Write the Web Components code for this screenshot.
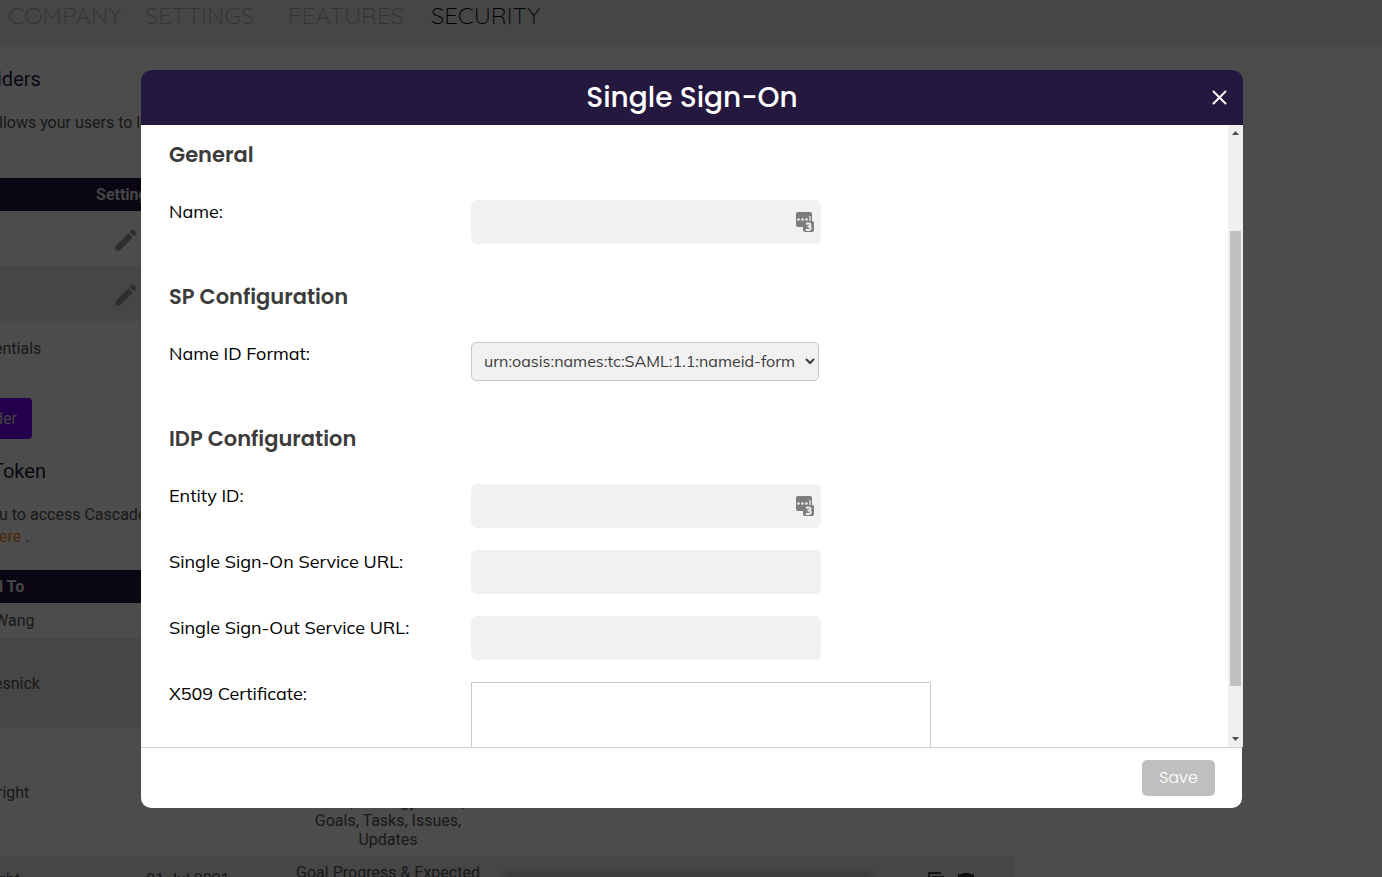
<!DOCTYPE html>
<html lang="en">
<head>
<meta charset="utf-8">
<meta name="viewport" content="width=device-width, initial-scale=1">
<title>Security settings</title>
<style>
html, body { margin: 0; height: 100%; }
body { overflow: hidden; background: #fff; font: 16px/22px Roboto, "Liberation Sans", sans-serif; }
</style>
</head>
<body>
<security-page></security-page>
<modal-overlay>
  <modal-dialog heading="Single Sign-On">
    <form-section heading="General">
      <form-row label="Name:" kind="text" manager></form-row>
    </form-section>
    <form-section heading="SP Configuration">
      <form-row label="Name ID Format:" kind="select"></form-row>
    </form-section>
    <form-section heading="IDP Configuration">
      <form-row label="Entity ID:" kind="text" manager></form-row>
      <form-row label="Single Sign-On Service URL:" kind="text"></form-row>
      <form-row label="Single Sign-Out Service URL:" kind="text"></form-row>
      <form-row label="X509 Certificate:" kind="textarea"></form-row>
    </form-section>
    <save-button slot="actions">Save</save-button>
  </modal-dialog>
</modal-overlay>
<script>
class Base extends HTMLElement {
  connectedCallback() {
    if (!this.shadowRoot) this.attachShadow({ mode: 'open' }).innerHTML = this.render();
  }
}

customElements.define('page-tabs', class extends Base {
  render() {
    return `<style>
      :host { display: block; background: #e9e9e9; }
      nav { display: grid; grid-template-columns: 111px 117px 117px auto; justify-content: start; gap: 26px; height: 47px; padding-left: 8px; box-sizing: border-box; }
      a { font: 300 24px/30px Quicksand, Lato, sans-serif; color: #adadad; text-decoration: none; white-space: nowrap; }
      a[aria-current] { color: #000; }
    </style>
    <nav><a href="#company">COMPANY</a><a href="#settings">SETTINGS</a><a href="#features">FEATURES</a><a href="#security" aria-current="page">SECURITY</a></nav>`;
  }
});

customElements.define('pencil-icon', class extends Base {
  render() {
    return `<style>:host { display: block; } svg { display: block; }</style>
    <svg width="28" height="28" viewBox="0 0 24 24" fill="#9a9a9a"><path d="M3 17.25V21h3.75L17.81 9.94l-3.75-3.75L3 17.25zM20.71 7.04a.996.996 0 0 0 0-1.41l-2.34-2.34a.996.996 0 0 0-1.41 0l-1.83 1.83 3.75 3.75 1.83-1.83z"/></svg>`;
  }
});

customElements.define('security-page', class extends Base {
  render() {
    return `<style>
      :host { display: block; height: 100vh; overflow: hidden; color: #555; }
      section { margin-left: -6px; }
      h2 { margin: 0; font-weight: 400; font-size: 20px; line-height: 24px; color: #24183f; }
      h2, p { white-space: nowrap; }
      p { margin: 0; }
      .intro { padding-left: 5px; }
      a { color: #ff8a2a; text-decoration: none; }
      .providers { padding-top: 20px; }
      .providers h2 { padding-left: 3px; }
      .providers p { margin: 21px 0 44px; }
      table { border-collapse: collapse; table-layout: fixed; }
      td, th { padding: 0; }
      thead tr { height: 33px; background: #24183f; color: #e8e8e8; }
      .settings { width: 264px; }
      .settings tbody tr { height: 55px; }
      .settings tbody tr:nth-child(even), .tokens tbody tr:nth-child(even) { background: #ebebeb; }
      .settings pencil-icon { width: 28px; margin: 2px auto 0; }
      .providers .settings + p { margin: 17px 0 38px; }
      button { display: block; height: 41px; border: 0; border-radius: 4px; background: #7a00ff; color: #ddd; font: inherit; padding: 0 15px 0 0; }
      .token { margin-top: 20px; }
      .token h2 { margin-left: -2px; }
      .token p { margin: 21px 0 22px; }
      .tokens { width: 1020px; line-height: 19px; text-align: center; }
      .tokens th:first-child, .tokens td:first-child { text-align: left; }
      .r1 { height: 35px; } .r2 { height: 90px; } .r3 { height: 128px; } .r4 { height: 72px; }
      .r3 td:first-child, .r4 td:first-child { padding-left: 3px; }
      .r3 td:nth-child(3) { vertical-align: bottom; padding-bottom: 7px; }
      .r4 td { vertical-align: top; padding-top: 7px; }
      .r4 td:first-child, .r4 td:nth-child(2), .r4 td:nth-child(5) { padding-top: 14px; }
      .r4 td:nth-child(4) { padding-top: 16px; }
      .blur { height: 8px; background: #c4c4c4; filter: blur(3px); margin: 0 15px; }
      .acts svg { margin: 0 3px; }
    </style>
    <page-tabs></page-tabs>
    <section class="providers">
      <h2>iders</h2>
      <p class="intro">llows your users to log in</p>
      <table class="settings">
        <thead><tr><th>Settings</th></tr></thead>
        <tbody><tr><td><pencil-icon></pencil-icon></td></tr><tr><td><pencil-icon></pencil-icon></td></tr></tbody>
      </table>
      <p>entials</p>
      <button type="button">der</button>
    </section>
    <section class="token">
      <h2>Token</h2>
      <p class="intro">u to access Cascade<br><a href="#docs">ere</a> .</p>
      <table class="tokens">
        <colgroup><col style="width:94px"><col style="width:200px"><col style="width:200px"><col style="width:400px"><col></colgroup>
        <thead><tr><th>d To</th><th></th><th></th><th></th><th></th></tr></thead>
        <tbody>
          <tr class="r1"><td>Wang</td><td></td><td></td><td></td><td></td></tr>
          <tr class="r2"><td>esnick</td><td></td><td></td><td></td><td></td></tr>
          <tr class="r3"><td>right</td><td></td><td>Plans, Strategy Areas,<br>Goals, Tasks, Issues,<br>Updates</td><td></td><td></td></tr>
          <tr class="r4"><td>ght</td><td>01 Jul 2021</td><td>Goal Progress &amp; Expected</td><td><div class="blur"></div></td>
            <td class="acts"><svg width="24" height="24" viewBox="0 0 24 24" fill="#444"><path d="M4 2h13v2H6v13H4V2zm4 4h12v16H8V6zm2 2v12h8V8h-8z"/></svg><svg width="24" height="24" viewBox="0 0 24 24" fill="#333"><path d="M9 3h6l1 1h4v3H4V4h4l1-1zM5 8h14v13H5V8z"/></svg></td></tr>
        </tbody>
      </table>
    </section>`;
  }
});

customElements.define('modal-overlay', class extends Base {
  render() {
    return `<style>
      :host { position: fixed; inset: 0; display: flex; box-sizing: border-box; padding: 70px 139px 69px 141px; background: rgba(0,0,0,.7); }
      ::slotted(*) { flex: 1; min-width: 0; }
    </style><slot></slot>`;
  }
});

customElements.define('scroll-rail', class extends Base {
  render() {
    return `<style>
      :host { display: flex; flex-direction: column; align-items: center; width: 15px; background: #f0f0f0; }
      svg { display: block; flex: none; }
      .track { flex: 1; align-self: stretch; display: grid; grid-template-rows: 91fr 455fr 46fr; padding: 0 2px; }
      .thumb { grid-row: 2; background: #c1c1c1; }
    </style>
    <svg width="15" height="15"><path d="M4 10h7L7.500 6z" fill="#505050"/></svg>
    <div class="track"><div class="thumb"></div></div>
    <svg width="15" height="15"><path d="M4 5h7L7.500 9z" fill="#505050"/></svg>`;
  }
});

customElements.define('modal-dialog', class extends Base {
  render() {
    return `<style>
      :host { display: flex; flex-direction: column; }
      header { flex: none; display: grid; grid-template-columns: 1fr auto 1fr; align-items: center; height: 55px; background: #24183f; color: #fff; border-radius: 11px 11px 0 0; }
      h1 { grid-column: 2; margin: 0; font: 500 28px/40px Poppins, Inter, sans-serif; }
      button { justify-self: end; margin-right: 14px; width: 20px; height: 20px; padding: 0; border: 0; background: none; }
      button svg { display: block; }
      .body { flex: 1; min-height: 0; display: flex; background: #fff; }
      .content { flex: 1; min-width: 0; overflow: hidden; padding: 14px 28px 0; box-sizing: border-box; }
      footer { flex: none; display: flex; justify-content: flex-end; align-items: center; height: 61px; margin-right: 1px; padding-right: 27px; box-sizing: border-box; border-top: 1px solid #d4d4d4; background: #fff; border-radius: 0 0 10px 10px; }
    </style>
    <header><h1>${this.getAttribute('heading')}</h1>
      <button type="button" aria-label="Close"><svg width="20" height="20" viewBox="0 0 20 20" fill="none" stroke="#fff" stroke-width="2" stroke-linecap="round"><path d="M4.500 3.500l12 12M16.500 3.500l-12 12"/></svg></button></header>
    <div class="body"><div class="content"><slot></slot></div><scroll-rail></scroll-rail></div>
    <footer><slot name="actions"></slot></footer>`;
  }
});

customElements.define('form-section', class extends Base {
  render() {
    return `<style>
      :host { display: flow-root; margin-bottom: 15px; }
      h2 { margin: 0 0 29px; font: 600 21px/32px Poppins, Inter, sans-serif; color: #3c3c3c; }
    </style><h2>${this.getAttribute('heading')}</h2><slot></slot>`;
  }
});

customElements.define('form-row', class extends Base {
  render() {
    const label = this.getAttribute('label');
    const controls = {
      text: '<input id="f" type="text">',
      select: '<select id="f"><option>urn:oasis:names:tc:SAML:1.1:nameid-form</option></select>',
      textarea: '<textarea id="f" rows="6"></textarea>'
    };
    const badge = this.hasAttribute('manager') ? `<svg class="badge" width="20" height="22" viewBox="0 0 20 22">
      <path d="M3 1h12a2 2 0 0 1 2 2v7h-6a2 2 0 0 0-2 2v4H3a2 2 0 0 1-2-2V3a2 2 0 0 1 2-2z" fill="#7d7d7d"/>
      <rect x="8" y="10" width="11" height="11" rx="2" fill="#7d7d7d"/>
      <circle cx="3.500" cy="8.500" r="1.300" fill="#eee"/><circle cx="7.500" cy="8.500" r="1.300" fill="#eee"/><circle cx="11.500" cy="8.500" r="1.300" fill="#eee"/>
      <path d="M14 5h2v5h-2z" fill="#c4c4c4"/>
      <path d="M11 12.800q4.500-.8 4.500 1.200t-2.800 1.500q3.300 0 3.100 2t-5 1.400" fill="none" stroke="#f1f1f1" stroke-width="1.900"/></svg>` : '';
    return `<style>
      :host { display: grid; grid-template-columns: 302px 1fr; align-items: start; min-height: 44px; margin-bottom: 22px; }
      label { font: 18px/24px Mulish, "Noto Sans", sans-serif; color: #000; }
      .control { position: relative; width: 350px; }
      input, select, textarea { display: block; box-sizing: border-box; margin: 0; font: 16px/24px Mulish, "Noto Sans", sans-serif; color: #3c3c3c; }
      input { width: 350px; height: 44px; padding: 0 36px 0 12px; border: 0; border-radius: 6px; background: #f1f1f1; }
      select { width: 348px; height: 39px; padding: 0 0 2px 8px; border: 1px solid #c8c8c8; border-radius: 5px; background: #f1f1f1; }
      textarea { width: 460px; height: 140px; border: 1px solid #c8c8c8; background: #fff; resize: none; }
      .badge { position: absolute; right: 6px; top: 11px; }
    </style><label for="f">${label}</label><div class="control">${controls[this.getAttribute('kind')]}${badge}</div>`;
  }
});

customElements.define('save-button', class extends Base {
  render() {
    return `<style>
      :host { display: block; }
      button { display: block; width: 73px; height: 36px; padding: 0; border: 0; border-radius: 5px; background: #bfbfbf; color: #fff; font: 300 16px/24px Poppins, Inter, sans-serif; }
    </style><button type="button" disabled><slot></slot></button>`;
  }
});
</script>
</body>
</html>
